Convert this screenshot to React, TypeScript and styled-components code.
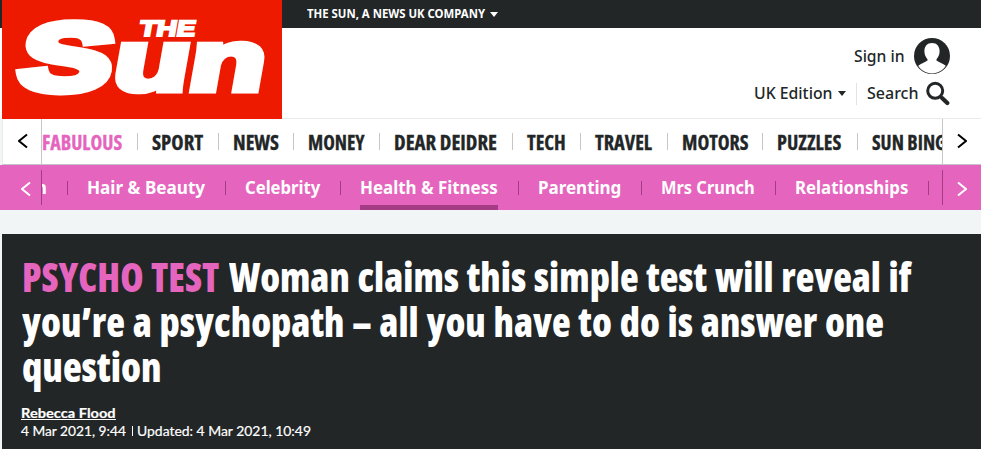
import React, { useLayoutEffect, useRef, useState } from "react";
import styled, { createGlobalStyle } from "styled-components";

const INK = "#222627";
const PINK = "#e565be";
const PLUM = "#a33b85";

const GlobalStyle = createGlobalStyle`
  *, *::before, *::after { box-sizing: border-box; }
  html, body { margin: 0; padding: 0; overflow: hidden; }
  body { background: #f1f5f6; font-family: "Noto Sans", sans-serif; color: ${INK}; }
`;

const FitBox = styled.span<{ $width: number }>`
  display: block;
  flex: none;
  width: ${(p) => p.$width}px;
  white-space: pre;
`;

const FitInner = styled.span`
  display: inline-block;
  transform-origin: 0 50%;
`;

/* Condenses or widens a run of text so that it fills the given width. */
function Fit({ width, children }: { width: number; children: React.ReactNode }) {
  const ref = useRef<HTMLSpanElement>(null);
  const [scale, setScale] = useState(1);
  useLayoutEffect(() => {
    if (ref.current) setScale(width / ref.current.offsetWidth);
  }, [width]);
  return (
    <FitBox $width={width}>
      <FitInner ref={ref} style={{ transform: `scaleX(${scale})` }}>
        {children}
      </FitInner>
    </FitBox>
  );
}

const Page = styled.div`
  width: 981px;
  height: 449px;
  display: flex;
  flex-direction: column;
  overflow: hidden;
`;

const Header = styled.header`
  display: flex;
  height: 119px;
  padding-left: 2px;
  background: linear-gradient(${INK} 28px, #fff 28px);
`;

const LogoLink = styled.a`
  flex: none;
  width: 280px;
  height: 119px;
  background: #ed1a00;
  svg { display: block; overflow: visible; }
`;

const HeaderMain = styled.div`
  flex: 1;
  display: flex;
  flex-direction: column;
  border-bottom: 1px solid #e9eaea;
`;

const TopBar = styled.div`
  display: flex;
  align-items: center;
  gap: 5px;
  height: 28px;
  padding-left: 25px;
  background: ${INK};
  color: #fff;
  font: 700 12px/28px "Noto Sans", sans-serif;
`;

const Caret = styled.span<{ $w: number; $h: number }>`
  width: 0;
  height: 0;
  border-left: ${(p) => p.$w / 2}px solid transparent;
  border-right: ${(p) => p.$w / 2}px solid transparent;
  border-top: ${(p) => p.$h}px solid currentColor;
`;

const UserArea = styled.div`
  display: flex;
  flex-direction: column;
  align-items: flex-end;
  padding: 9px 31px 0 0;
`;

const UserRow = styled.div<{ $height: number }>`
  display: flex;
  align-items: center;
  height: ${(p) => p.$height}px;
  font: 500 16px/22px "Noto Sans", sans-serif;
`;

const Edition = styled.div`
  display: flex;
  align-items: center;
  gap: 5px;
  height: 22px;
  padding-right: 10px;
  margin-right: 10px;
  border-right: 1px solid #dfe5e7;

  > :first-child { margin-top: -1px; }
`;

const SearchLabel = styled.span`
  margin-top: -1px;
`;

const IconSlot = styled.span<{ $gap: number }>`
  display: flex;
  margin-left: ${(p) => p.$gap}px;
`;

const MainNav = styled.nav`
  display: flex;
  height: 46px;
  margin-left: 2px;
  background: #fff;
  border-left: 1px solid #e9eaea;
  border-bottom: 1px solid #c6c2cb;
`;

const NavArrow = styled.button<{ $side: "left" | "right" }>`
  flex: none;
  display: flex;
  align-items: center;
  justify-content: center;
  width: 39px;
  padding: 0 0 1px ${(p) => (p.$side === "left" ? 2 : 0)}px;
  border: 0 solid #c4c7c8;
  border-left-width: ${(p) => (p.$side === "right" ? 1 : 0)}px;
  border-right-width: ${(p) => (p.$side === "left" ? 1 : 0)}px;
  background: none;
  color: #000;
`;

const NavList = styled.div`
  flex: 1;
  display: flex;
  align-items: center;
  min-width: 0;
  overflow: hidden;
`;

const NavItem = styled.a<{ $width: number; $active?: boolean; $first?: boolean }>`
  flex: none;
  display: flex;
  align-items: center;
  width: ${(p) => p.$width}px;
  height: 17px;
  padding-left: ${(p) => (p.$first ? 0 : 13.5)}px;
  border-right: 1px solid #c4c7c8;
  font: 700 21px/30px "Open Sans", sans-serif;
  font-stretch: 75%;
  -webkit-text-stroke: 0.3px currentColor;
  color: ${(p) => (p.$active ? PINK : INK)};
`;

const SubNav = styled.nav`
  display: flex;
  height: 45px;
  background: ${PINK};
  color: #fff;
`;

const SubArrow = styled(NavArrow)`
  width: ${(p) => (p.$side === "left" ? 42 : 39)}px;
  height: 35px;
  margin-top: 5px;
  padding: 2px 0 0 ${(p) => (p.$side === "left" ? 10 : 0)}px;
  border-color: ${PLUM};
  color: #fff;
`;

const SubItem = styled.a<{ $active?: boolean }>`
  flex: none;
  display: flex;
  align-items: center;
  height: 45px;
  margin: 0 20px 0 19px;
  padding-bottom: 2px;
  font: 700 18px/24px "Noto Sans", sans-serif;
  box-shadow: ${(p) => (p.$active ? `inset 0 -5px ${PLUM}` : "none")};
`;

const SubPartial = styled.span`
  flex: none;
  width: 25px;
  display: flex;
  justify-content: flex-end;
  padding: 0 20px 2px 0;
  font: 700 18px/24px "Noto Sans", sans-serif;
`;

const SubDivider = styled.span`
  flex: none;
  width: 1px;
  height: 14px;
  background: ${PLUM};
`;

const Article = styled.main`
  flex: 1;
  margin: 24px 0 0 2px;
  padding: 20px 0 0 19px;
  background: ${INK};
  color: #fff;
`;

const Headline = styled.h1`
  margin: 0 0 0 0.5px;
  font: 800 40.5px/45px "Open Sans", sans-serif;
  font-stretch: 75%;
  word-spacing: 1px;
`;

const HeadlineRow = styled.span<{ $gap?: number }>`
  display: flex;
  gap: ${(p) => p.$gap ?? 0}px;
  height: 45px;
`;

const Kicker = styled.span`
  color: ${PINK};
`;

const Byline = styled.div`
  margin-top: 15px;
  font: 400 14px/18px Lato, sans-serif;
  -webkit-text-stroke: 0.2px currentColor;
`;

const Author = styled.a`
  display: block;
  width: 95px;
  height: 16px;
  border-bottom: 1px solid #fff;
  font-weight: 700;
`;

const Dates = styled.div`
  display: flex;
  align-items: center;
  margin-top: 2px;
`;

const DateBar = styled.span`
  width: 1px;
  height: 10px;
  margin: 0 4px 0 6px;
  background: #fff;
`;

const Logo = () => (
  <svg width="280" height="119" viewBox="0 0 280 119" role="img" aria-label="The Sun">
    <g fill="#fff" stroke="#fff" fontFamily="Liberation Sans, sans-serif" fontWeight="700">
      <text transform="translate(13.500 89.500) skewX(-10) scale(1.45 1)" fontSize="95" strokeWidth="9">S</text>
      <text transform="translate(108 90) skewX(-10) scale(1.46 1)" fontSize="85" strokeWidth="7">un</text>
      <text transform="translate(136.500 35.600) skewX(-10) scale(1.27 1)" fontSize="22" strokeWidth="2">THE</text>
    </g>
  </svg>
);

const Avatar = () => (
  <svg width="36" height="36" viewBox="0 0 36 36">
    <circle cx="18" cy="18" r="18" fill={INK} />
    <path
      d="M18 5c4.8 0 7.6 3.5 7.6 8.3 0 3.600-1.300 6-3.100 7.900v1.300c2.500 2 6.500 2.800 9.300 5.300C28.800 32.400 23.800 35.400 18 35.400S7.200 32.400 4.200 27.800c2.800-2.500 6.800-3.300 9.300-5.300v-1.300c-1.800-1.900-3.100-4.300-3.100-7.900C10.400 8.500 13.200 5 18 5Z"
      fill="#fff"
    />
  </svg>
);

const SearchIcon = () => (
  <svg width="24" height="25" viewBox="0 0 24 25" fill="none" stroke={INK}>
    <circle cx="9.200" cy="9.800" r="7.500" strokeWidth="3" />
    <path d="M14.500 15.500l2 2" strokeWidth="3" />
    <path d="M16.300 17.200l5 4.800" strokeWidth="4.200" strokeLinecap="round" />
  </svg>
);

const Chevron = ({ right = false }: { right?: boolean }) => (
  <svg width="10" height="16" viewBox="0 0 10 16" fill="none" stroke="currentColor" strokeWidth="2">
    <path d={right ? "M1 1.500l8 6.500-8 6.500" : "M9 1.500L1 8l8 6.500"} />
  </svg>
);

const sections = [
  { label: "FABULOUS", width: 96, text: 80.5, active: true },
  { label: "SPORT", width: 81, text: 51.5 },
  { label: "NEWS", width: 75, text: 46.5 },
  { label: "MONEY", width: 86, text: 57 },
  { label: "DEAR DEIDRE", width: 133, text: 103 },
  { label: "TECH", width: 68, text: 38.5 },
  { label: "TRAVEL", width: 87, text: 57 },
  { label: "MOTORS", width: 95, text: 66.5 },
  { label: "PUZZLES", width: 95, text: 64.5 },
  { label: "SUN BINGO", width: 120, text: 86 },
];

const topics = [
  { label: "Hair & Beauty", text: 118 },
  { label: "Celebrity", text: 75 },
  { label: "Health & Fitness", text: 138, active: true },
  { label: "Parenting", text: 83 },
  { label: "Mrs Crunch", text: 94 },
  { label: "Relationships", text: 113 },
];

export default function App() {
  return (
    <>
      <GlobalStyle />
      <Page>
        <Header>
          <LogoLink><Logo /></LogoLink>
          <HeaderMain>
            <TopBar>
              <Fit width={178}>THE SUN, A NEWS UK COMPANY</Fit>
              <Caret $w={8} $h={5} />
            </TopBar>
            <UserArea>
              <UserRow $height={38}>
                <Fit width={51}>Sign in</Fit>
                <IconSlot $gap={9}><Avatar /></IconSlot>
              </UserRow>
              <UserRow $height={37}>
                <Edition>
                  <Fit width={79}>UK Edition</Fit>
                  <Caret $w={8} $h={5} />
                </Edition>
                <SearchLabel><Fit width={51}>Search</Fit></SearchLabel>
                <IconSlot $gap={8}><SearchIcon /></IconSlot>
              </UserRow>
            </UserArea>
          </HeaderMain>
        </Header>
        <MainNav>
          <NavArrow $side="left"><Chevron /></NavArrow>
          <NavList>
            {sections.map((s, i) => (
              <NavItem key={s.label} $width={s.width} $active={s.active} $first={i === 0}>
                <Fit width={s.text}>{s.label}</Fit>
              </NavItem>
            ))}
          </NavList>
          <NavArrow $side="right"><Chevron right /></NavArrow>
        </MainNav>
        <SubNav>
          <SubArrow $side="left"><Chevron /></SubArrow>
          <NavList>
            <SubPartial>Fashion</SubPartial>
            <SubDivider />
            {topics.map((t) => (
              <React.Fragment key={t.label}>
                <SubItem $active={t.active}><Fit width={t.text}>{t.label}</Fit></SubItem>
                <SubDivider />
              </React.Fragment>
            ))}
          </NavList>
          <SubArrow $side="right"><Chevron right /></SubArrow>
        </SubNav>
        <Article>
          <Headline>
            <HeadlineRow $gap={9.5}>
              <Kicker><Fit width={197.5}>PSYCHO TEST</Fit></Kicker>
              <Fit width={682}>Woman claims this simple test will reveal if</Fit>
            </HeadlineRow>
            <HeadlineRow><Fit width={862}>you’re a psychopath – all you have to do is answer one</Fit></HeadlineRow>
            <HeadlineRow><Fit width={140}>question</Fit></HeadlineRow>
          </Headline>
          <Byline>
            <Author><Fit width={95}>Rebecca Flood</Fit></Author>
            <Dates>
              <Fit width={105}>4 Mar 2021, 9:44</Fit>
              <DateBar />
              <Fit width={174}>Updated: 4 Mar 2021, 10:49</Fit>
            </Dates>
          </Byline>
        </Article>
      </Page>
    </>
  );
}
